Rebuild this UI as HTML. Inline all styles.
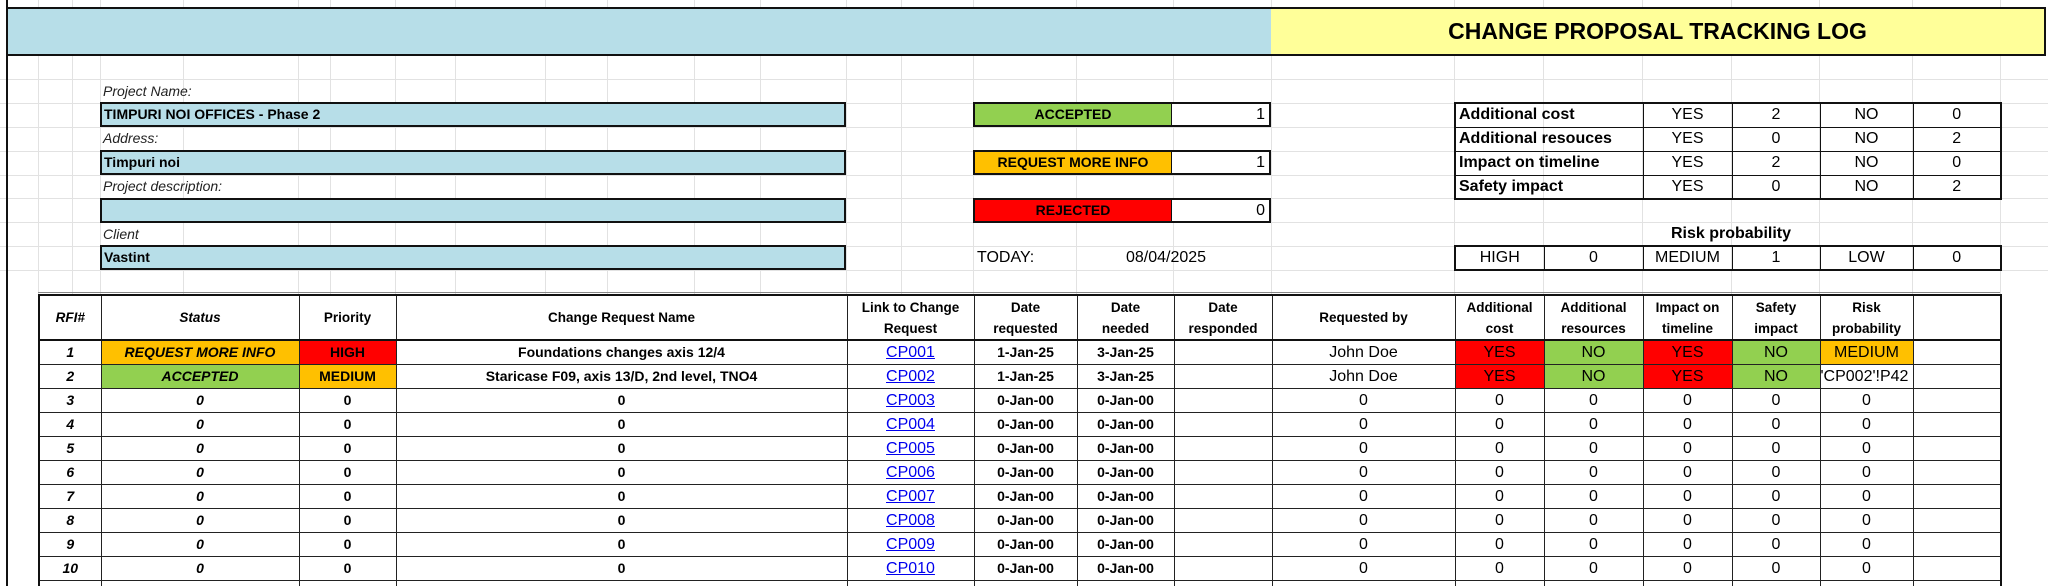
<!DOCTYPE html>
<html style="width:2048px;height:586px;overflow:hidden"><head><meta charset="utf-8"><style>
*{margin:0;padding:0;box-sizing:border-box}
body{width:2048px;height:586px;overflow:hidden;background:#fff;font-family:"Liberation Sans",Arial,sans-serif;position:relative}
.a{position:absolute}
.gv{position:absolute;top:0;height:294px;width:1px;background:#e2e2e2}
.gh{position:absolute;left:0;width:2048px;height:1px;background:#e2e2e2}
.box{position:absolute;border:2px solid #111;background:#b7dee8;font-weight:bold;font-size:14px;line-height:21px;padding-left:2px}
.lbl{position:absolute;font-style:italic;font-size:14px;color:#222;left:103px}
.st{position:absolute;left:973px;width:200px;height:25px;border:2px solid #111;font-weight:bold;font-size:14px;text-align:center;line-height:21px}
.sv{position:absolute;left:1171px;width:100px;height:25px;border:2px solid #111;border-left:1px solid #111;font-size:16px;text-align:right;padding-right:4px;line-height:21px;background:#fff}
table{border-collapse:collapse;table-layout:fixed}
.sum{position:absolute;left:1454px;border:2px solid #111}
.sum td{border:1px solid #111;font-size:16px;text-align:center;height:24px;padding:0;line-height:20px}
.sum td.l{text-align:left;font-weight:bold;padding-left:3px}
.main{position:absolute;left:38px;top:294px;border-top:2px solid #111;border-left:2px solid #111;border-right:2px solid #111}
.main td{border:1px solid #222;text-align:center;font-size:14px;font-weight:bold;height:24px;padding:0;white-space:nowrap;line-height:20px;vertical-align:middle;overflow:hidden}
.main tr.h td{height:45px;border-bottom:2px solid #111;line-height:21px;font-size:13.5px}
.main td.n{font-style:italic}
.main td.r{font-weight:normal;font-size:16px;padding-top:2px}
.main td.k{padding-top:1px}
.main a{color:#0000ee;text-decoration:underline;font-weight:normal;font-size:16px}
.R{background:#ff0000}.G{background:#92d050}.O{background:#ffc000}
</style></head><body>
<div class="gv" style="left:38px"></div><div class="gv" style="left:72px"></div><div class="gv" style="left:100px"></div><div class="gv" style="left:183px"></div><div class="gv" style="left:298px"></div><div class="gv" style="left:330px"></div><div class="gv" style="left:395px"></div><div class="gv" style="left:455px"></div><div class="gv" style="left:545px"></div><div class="gv" style="left:607px"></div><div class="gv" style="left:694px"></div><div class="gv" style="left:760px"></div><div class="gv" style="left:846px"></div><div class="gv" style="left:901px"></div><div class="gv" style="left:973px"></div><div class="gv" style="left:1076px"></div><div class="gv" style="left:1173px"></div><div class="gv" style="left:1271px"></div><div class="gv" style="left:1454px"></div><div class="gv" style="left:1543px"></div><div class="gv" style="left:1642px"></div><div class="gv" style="left:1731px"></div><div class="gv" style="left:1819px"></div><div class="gv" style="left:1912px"></div><div class="gv" style="left:2000px;height:586px"></div>
<div class="gh" style="top:79px"></div><div class="gh" style="top:103px"></div><div class="gh" style="top:127px"></div><div class="gh" style="top:151px"></div><div class="gh" style="top:175px"></div><div class="gh" style="top:198px"></div><div class="gh" style="top:222px"></div><div class="gh" style="top:246px"></div><div class="gh" style="top:270px"></div>
<div class="gh" style="top:292px;background:#888;left:38px;width:1962px"></div>
<div class="a" style="left:6px;top:0;width:2px;height:586px;background:#111"></div>
<div class="a" style="left:6px;top:7px;width:2040px;height:49px;border:2px solid #111;background:#b7dee8"></div>
<div class="a" style="left:1271px;top:9px;width:773px;height:45px;background:#ffff99;font-weight:bold;font-size:23px;text-align:center;line-height:45px">CHANGE PROPOSAL TRACKING LOG</div>
<div class="lbl" style="top:83px">Project Name:</div>
<div class="box" style="left:100px;top:102px;width:746px;height:25px">TIMPURI NOI OFFICES - Phase 2</div>
<div class="lbl" style="top:130px">Address:</div>
<div class="box" style="left:100px;top:150px;width:746px;height:25px">Timpuri noi</div>
<div class="lbl" style="top:178px">Project description:</div>
<div class="box" style="left:100px;top:198px;width:746px;height:25px"></div>
<div class="lbl" style="top:226px">Client</div>
<div class="box" style="left:100px;top:245px;width:746px;height:25px">Vastint</div>
<div class="st G" style="top:102px">ACCEPTED</div><div class="sv" style="top:102px">1</div>
<div class="st O" style="top:150px">REQUEST MORE INFO</div><div class="sv" style="top:150px">1</div>
<div class="st R" style="top:198px">REJECTED</div><div class="sv" style="top:198px">0</div>
<div class="a" style="left:977px;top:249px;font-size:16px">TODAY:</div>
<div class="a" style="left:1126px;top:249px;font-size:16px">08/04/2025</div>
<table class="sum" style="top:102px;width:546px">
<colgroup><col style="width:188px"><col style="width:89px"><col style="width:88px"><col style="width:93px"><col style="width:88px"></colgroup>
<tr><td class="l">Additional cost</td><td>YES</td><td>2</td><td>NO</td><td>0</td></tr>
<tr><td class="l">Additional resouces</td><td>YES</td><td>0</td><td>NO</td><td>2</td></tr>
<tr><td class="l">Impact on timeline</td><td>YES</td><td>2</td><td>NO</td><td>0</td></tr>
<tr><td class="l">Safety impact</td><td>YES</td><td>0</td><td>NO</td><td>2</td></tr>
</table>
<div class="a" style="left:1642px;width:178px;top:225px;text-align:center;font-weight:bold;font-size:16px">Risk probability</div>
<table class="sum" style="top:245px;width:546px">
<colgroup><col style="width:89px"><col style="width:99px"><col style="width:89px"><col style="width:88px"><col style="width:93px"><col style="width:88px"></colgroup>
<tr><td>HIGH</td><td>0</td><td>MEDIUM</td><td>1</td><td>LOW</td><td>0</td></tr>
</table>
<table class="main" style="width:1962px">
<colgroup><col style="width:62px"><col style="width:198px"><col style="width:97px"><col style="width:451px"><col style="width:127px"><col style="width:103px"><col style="width:97px"><col style="width:98px"><col style="width:183px"><col style="width:89px"><col style="width:99px"><col style="width:89px"><col style="width:88px"><col style="width:93px"><col style="width:88px"></colgroup>
<tr class="h"><td class="n">RFI#</td><td class="n">Status</td><td>Priority</td><td>Change Request Name</td><td>Link to Change<br>Request</td><td>Date<br>requested</td><td>Date<br>needed</td><td>Date<br>responded</td><td>Requested by</td><td>Additional<br>cost</td><td>Additional<br>resources</td><td>Impact on<br>timeline</td><td>Safety<br>impact</td><td>Risk<br>probability</td><td></td></tr>
<tr><td class="n">1</td><td class="n O">REQUEST MORE INFO</td><td class="R">HIGH</td><td>Foundations changes axis 12/4</td><td class="k"><a>CP001</a></td><td>1-Jan-25</td><td>3-Jan-25</td><td></td><td class="r">John Doe</td><td class="r R">YES</td><td class="r G">NO</td><td class="r R">YES</td><td class="r G">NO</td><td class="r O">MEDIUM</td><td></td></tr>
<tr><td class="n">2</td><td class="n G">ACCEPTED</td><td class="O">MEDIUM</td><td>Staricase F09, axis 13/D, 2nd level, TNO4</td><td class="k"><a>CP002</a></td><td>1-Jan-25</td><td>3-Jan-25</td><td></td><td class="r">John Doe</td><td class="r R">YES</td><td class="r G">NO</td><td class="r R">YES</td><td class="r G">NO</td><td class="r" style="text-align:left;overflow:visible">'CP002'!P42</td><td></td></tr>
<tr><td class="n">3</td><td class="n">0</td><td>0</td><td>0</td><td class="k"><a>CP003</a></td><td>0-Jan-00</td><td>0-Jan-00</td><td></td><td class="r">0</td><td class="r">0</td><td class="r">0</td><td class="r">0</td><td class="r">0</td><td class="r">0</td><td></td></tr>
<tr><td class="n">4</td><td class="n">0</td><td>0</td><td>0</td><td class="k"><a>CP004</a></td><td>0-Jan-00</td><td>0-Jan-00</td><td></td><td class="r">0</td><td class="r">0</td><td class="r">0</td><td class="r">0</td><td class="r">0</td><td class="r">0</td><td></td></tr>
<tr><td class="n">5</td><td class="n">0</td><td>0</td><td>0</td><td class="k"><a>CP005</a></td><td>0-Jan-00</td><td>0-Jan-00</td><td></td><td class="r">0</td><td class="r">0</td><td class="r">0</td><td class="r">0</td><td class="r">0</td><td class="r">0</td><td></td></tr>
<tr><td class="n">6</td><td class="n">0</td><td>0</td><td>0</td><td class="k"><a>CP006</a></td><td>0-Jan-00</td><td>0-Jan-00</td><td></td><td class="r">0</td><td class="r">0</td><td class="r">0</td><td class="r">0</td><td class="r">0</td><td class="r">0</td><td></td></tr>
<tr><td class="n">7</td><td class="n">0</td><td>0</td><td>0</td><td class="k"><a>CP007</a></td><td>0-Jan-00</td><td>0-Jan-00</td><td></td><td class="r">0</td><td class="r">0</td><td class="r">0</td><td class="r">0</td><td class="r">0</td><td class="r">0</td><td></td></tr>
<tr><td class="n">8</td><td class="n">0</td><td>0</td><td>0</td><td class="k"><a>CP008</a></td><td>0-Jan-00</td><td>0-Jan-00</td><td></td><td class="r">0</td><td class="r">0</td><td class="r">0</td><td class="r">0</td><td class="r">0</td><td class="r">0</td><td></td></tr>
<tr><td class="n">9</td><td class="n">0</td><td>0</td><td>0</td><td class="k"><a>CP009</a></td><td>0-Jan-00</td><td>0-Jan-00</td><td></td><td class="r">0</td><td class="r">0</td><td class="r">0</td><td class="r">0</td><td class="r">0</td><td class="r">0</td><td></td></tr>
<tr><td class="n">10</td><td class="n">0</td><td>0</td><td>0</td><td class="k"><a>CP010</a></td><td>0-Jan-00</td><td>0-Jan-00</td><td></td><td class="r">0</td><td class="r">0</td><td class="r">0</td><td class="r">0</td><td class="r">0</td><td class="r">0</td><td></td></tr>
<tr><td class="n"></td><td></td><td></td><td></td><td></td><td></td><td></td><td></td><td></td><td></td><td></td><td></td><td></td><td></td><td></td></tr>
</table>
</body></html>
